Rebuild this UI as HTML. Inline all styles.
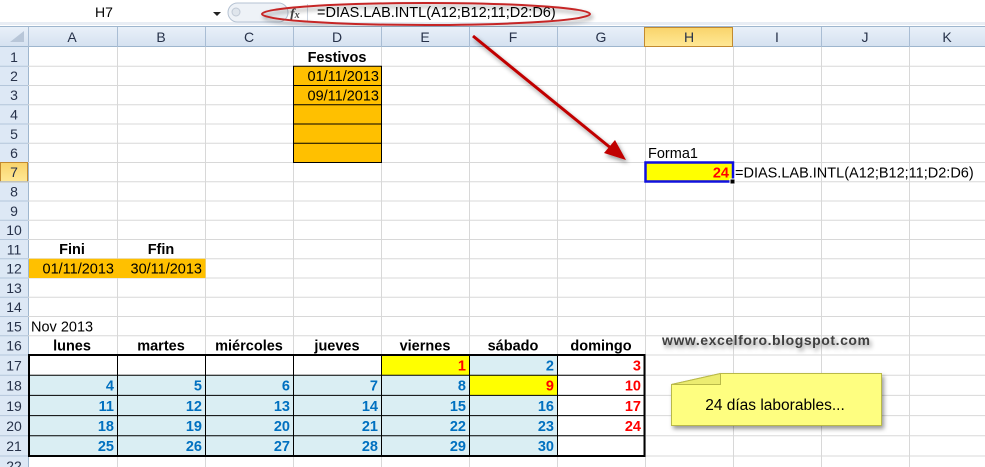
<!DOCTYPE html>
<html><head><meta charset="utf-8">
<style>
html,body{margin:0;padding:0;background:#fff;}
svg{display:block;font-family:"Liberation Sans",Arial,sans-serif;}
</style></head><body>
<svg width="985" height="467" viewBox="0 0 985 467" xmlns="http://www.w3.org/2000/svg">
<defs>
<linearGradient id="hg" x1="0" y1="0" x2="0" y2="1"><stop offset="0" stop-color="#e9f0f9"/><stop offset="1" stop-color="#d5e1f0"/></linearGradient>
<linearGradient id="og" x1="0" y1="0" x2="0" y2="1"><stop offset="0" stop-color="#f9d46b"/><stop offset="1" stop-color="#ffe896"/></linearGradient>
<filter id="sh" x="-20%" y="-20%" width="150%" height="160%"><feDropShadow dx="2" dy="3" stdDeviation="2" flood-color="#000" flood-opacity="0.4"/></filter>
</defs>
<!-- formula bar -->
<rect x="0" y="0" width="985" height="27" fill="#fff"/>
<rect x="0" y="22" width="985" height="3" fill="#e8edf4"/>
<line x1="0" y1="26.5" x2="985" y2="26.5" stroke="#9eb6ce"/>
<text x="104" y="17" font-size="14" fill="#000" text-anchor="middle">H7</text>
<path d="M213 12 h8 l-4 4 z" fill="#222"/>
<rect x="228" y="3" width="60" height="19" rx="9.5" fill="#eef2f7" stroke="#b6c3d3"/>
<circle cx="236" cy="12" r="4" fill="#dfe5ec" stroke="#c0c9d5"/>
<line x1="307.5" y1="4" x2="307.5" y2="21" stroke="#ccd5e0"/>
<text x="290" y="18" font-size="14" font-style="italic" font-weight="bold" font-family="Liberation Serif,serif" fill="#444">f<tspan font-size="10">x</tspan></text>
<text x="317" y="17" font-size="14.5" fill="#000">=DIAS.LAB.INTL(A12;B12;11;D2:D6)</text>
<ellipse cx="426" cy="14" rx="164" ry="11" fill="none" stroke="#c62828" stroke-width="2" filter="url(#sh)"/>

<!-- column header -->
<rect x="0" y="27" width="985" height="20" fill="url(#hg)"/>
<line x1="0" y1="46.5" x2="985" y2="46.5" stroke="#9eb6ce"/>
<path d="M10 42 L24 42 L24 31 Z" fill="#b8c6d8"/>
<rect x="644.5" y="27.5" width="88" height="19" fill="url(#og)" stroke="#c28a30"/>
<g stroke="#a9bdd4">
<line x1="28.5" y1="27" x2="28.5" y2="47"/><line x1="117.5" y1="27" x2="117.5" y2="47"/><line x1="205.5" y1="27" x2="205.5" y2="47"/><line x1="293.5" y1="27" x2="293.5" y2="47"/><line x1="381.5" y1="27" x2="381.5" y2="47"/><line x1="469.5" y1="27" x2="469.5" y2="47"/><line x1="557.5" y1="27" x2="557.5" y2="47"/><line x1="821.5" y1="27" x2="821.5" y2="47"/><line x1="909.5" y1="27" x2="909.5" y2="47"/>
</g>
<g font-size="14" fill="#27324a" text-anchor="middle">
<text x="72" y="42">A</text><text x="161" y="42">B</text><text x="249" y="42">C</text><text x="337" y="42">D</text><text x="425" y="42">E</text><text x="513" y="42">F</text><text x="601" y="42">G</text><text x="689" y="42">H</text><text x="777" y="42">I</text><text x="865" y="42">J</text><text x="947" y="42">K</text>
</g>

<!-- row header -->
<rect x="0" y="47" width="28" height="420" fill="#dde8f5"/>
<rect x="0.5" y="162.5" width="27" height="19.25" fill="url(#og)" stroke="#c28a30"/>
<line x1="28.5" y1="47" x2="28.5" y2="467" stroke="#9eb6ce"/>
<g stroke="#b4c6da">
<line x1="0" y1="66.25" x2="28" y2="66.25"/><line x1="0" y1="85.5" x2="28" y2="85.5"/><line x1="0" y1="104.75" x2="28" y2="104.75"/><line x1="0" y1="124" x2="28" y2="124"/><line x1="0" y1="143.25" x2="28" y2="143.25"/><line x1="0" y1="181.75" x2="28" y2="181.75"/><line x1="0" y1="201" x2="28" y2="201"/><line x1="0" y1="220.25" x2="28" y2="220.25"/><line x1="0" y1="239.5" x2="28" y2="239.5"/><line x1="0" y1="258.75" x2="28" y2="258.75"/><line x1="0" y1="278" x2="28" y2="278"/><line x1="0" y1="297.25" x2="28" y2="297.25"/><line x1="0" y1="316.5" x2="28" y2="316.5"/><line x1="0" y1="335.75" x2="28" y2="335.75"/><line x1="0" y1="355" x2="28" y2="355"/><line x1="0" y1="375.2" x2="28" y2="375.2"/><line x1="0" y1="395.4" x2="28" y2="395.4"/><line x1="0" y1="415.6" x2="28" y2="415.6"/><line x1="0" y1="435.8" x2="28" y2="435.8"/><line x1="0" y1="456" x2="28" y2="456"/>
</g>
<g font-size="14" fill="#27324a" text-anchor="middle">
<text x="14" y="62">1</text><text x="14" y="81">2</text><text x="14" y="100">3</text><text x="14" y="119.5">4</text><text x="14" y="139">5</text><text x="14" y="158">6</text><text x="14" y="177">7</text><text x="14" y="196.5">8</text><text x="14" y="216">9</text><text x="14" y="235">10</text><text x="14" y="254.5">11</text><text x="14" y="273.5">12</text><text x="14" y="293">13</text><text x="14" y="312">14</text><text x="14" y="331.5">15</text><text x="14" y="350.5">16</text><text x="14" y="370.5">17</text><text x="14" y="390.5">18</text><text x="14" y="411">19</text><text x="14" y="431">20</text><text x="14" y="451">21</text><text x="14" y="471">22</text>
</g>

<!-- gridlines -->
<g stroke="#d8d8d8">
<line x1="117.5" y1="47" x2="117.5" y2="467"/><line x1="205.5" y1="47" x2="205.5" y2="467"/><line x1="293.5" y1="47" x2="293.5" y2="467"/><line x1="381.5" y1="47" x2="381.5" y2="467"/><line x1="469.5" y1="47" x2="469.5" y2="467"/><line x1="557.5" y1="47" x2="557.5" y2="467"/><line x1="645.5" y1="47" x2="645.5" y2="467"/><line x1="733.5" y1="47" x2="733.5" y2="467"/><line x1="821.5" y1="47" x2="821.5" y2="467"/><line x1="909.5" y1="47" x2="909.5" y2="467"/>
<line x1="28" y1="66.25" x2="985" y2="66.25"/><line x1="28" y1="85.5" x2="985" y2="85.5"/><line x1="28" y1="104.75" x2="985" y2="104.75"/><line x1="28" y1="124" x2="985" y2="124"/><line x1="28" y1="143.25" x2="985" y2="143.25"/><line x1="28" y1="162.5" x2="985" y2="162.5"/><line x1="28" y1="181.75" x2="985" y2="181.75"/><line x1="28" y1="201" x2="985" y2="201"/><line x1="28" y1="220.25" x2="985" y2="220.25"/><line x1="28" y1="239.5" x2="985" y2="239.5"/><line x1="28" y1="258.75" x2="985" y2="258.75"/><line x1="28" y1="278" x2="985" y2="278"/><line x1="28" y1="297.25" x2="985" y2="297.25"/><line x1="28" y1="316.5" x2="985" y2="316.5"/><line x1="28" y1="335.75" x2="985" y2="335.75"/><line x1="28" y1="355" x2="985" y2="355"/><line x1="28" y1="375.2" x2="985" y2="375.2"/><line x1="28" y1="395.4" x2="985" y2="395.4"/><line x1="28" y1="415.6" x2="985" y2="415.6"/><line x1="28" y1="435.8" x2="985" y2="435.8"/><line x1="28" y1="456" x2="985" y2="456"/>
</g>

<!-- Festivos -->
<text x="337" y="62" font-size="14.5" font-weight="bold" text-anchor="middle">Festivos</text>
<rect x="293.5" y="66.25" width="88" height="96.25" fill="#ffc000"/>
<g stroke="#000" fill="none">
<rect x="293.5" y="66.25" width="88" height="96.25"/>
<line x1="293.5" y1="85.5" x2="381.5" y2="85.5"/><line x1="293.5" y1="104.75" x2="381.5" y2="104.75"/><line x1="293.5" y1="124" x2="381.5" y2="124"/><line x1="293.5" y1="143.25" x2="381.5" y2="143.25"/>
</g>
<g font-size="14.5" text-anchor="end">
<text x="379" y="81">01/11/2013</text><text x="379" y="100.5">09/11/2013</text>
</g>

<!-- Fini / Ffin -->
<rect x="29" y="258.75" width="176.5" height="19.25" fill="#ffc000"/>
<g font-size="14.5" font-weight="bold" text-anchor="middle"><text x="72" y="254">Fini</text><text x="161" y="254">Ffin</text></g>
<g font-size="14.5" text-anchor="end"><text x="114" y="273.5">01/11/2013</text><text x="202" y="273.5">30/11/2013</text></g>
<text x="31" y="331.5" font-size="14.5">Nov 2013</text>

<!-- Calendar headers -->
<g font-size="14.5" font-weight="bold" text-anchor="middle">
<text x="72" y="350.5">lunes</text><text x="161" y="350.5">martes</text><text x="249" y="350.5">miércoles</text><text x="337" y="350.5">jueves</text><text x="425" y="350.5">viernes</text><text x="513" y="350.5">sábado</text><text x="601" y="350.5">domingo</text>
</g>
<!-- calendar fills -->
<rect x="381.5" y="355" width="88" height="20.2" fill="#ffff00"/>
<rect x="469.5" y="355" width="88" height="20.2" fill="#daeef3"/>
<rect x="28.5" y="375.2" width="441" height="80.8" fill="#daeef3"/>
<rect x="469.5" y="375.2" width="88" height="20.2" fill="#ffff00"/>
<rect x="469.5" y="395.4" width="88" height="60.6" fill="#daeef3"/>
<g stroke="#000" fill="none">
<line x1="28" y1="375.2" x2="645" y2="375.2"/><line x1="28" y1="395.4" x2="645" y2="395.4"/><line x1="28" y1="415.6" x2="645" y2="415.6"/><line x1="28" y1="435.8" x2="645" y2="435.8"/>
<line x1="117.5" y1="355" x2="117.5" y2="456"/><line x1="205.5" y1="355" x2="205.5" y2="456"/><line x1="293.5" y1="355" x2="293.5" y2="456"/><line x1="381.5" y1="355" x2="381.5" y2="456"/><line x1="469.5" y1="355" x2="469.5" y2="456"/><line x1="557.5" y1="355" x2="557.5" y2="456"/>
<rect x="29" y="355" width="615.5" height="101" stroke-width="2"/>
</g>
<g font-size="14.5" font-weight="bold" text-anchor="end" fill="#0070c0">
<text x="466" y="370.5" fill="#ff0000">1</text><text x="554" y="370.5">2</text><text x="641" y="370.5" fill="#ff0000">3</text>
<text x="114" y="390.5">4</text><text x="202" y="390.5">5</text><text x="290" y="390.5">6</text><text x="378" y="390.5">7</text><text x="466" y="390.5">8</text><text x="554" y="390.5" fill="#ff0000">9</text><text x="641" y="390.5" fill="#ff0000">10</text>
<text x="114" y="411">11</text><text x="202" y="411">12</text><text x="290" y="411">13</text><text x="378" y="411">14</text><text x="466" y="411">15</text><text x="554" y="411">16</text><text x="641" y="411" fill="#ff0000">17</text>
<text x="114" y="431">18</text><text x="202" y="431">19</text><text x="290" y="431">20</text><text x="378" y="431">21</text><text x="466" y="431">22</text><text x="554" y="431">23</text><text x="641" y="431" fill="#ff0000">24</text>
<text x="114" y="451">25</text><text x="202" y="451">26</text><text x="290" y="451">27</text><text x="378" y="451">28</text><text x="466" y="451">29</text><text x="554" y="451">30</text>
</g>

<!-- H7 -->
<text x="648" y="158" font-size="14.5">Forma1</text>
<rect x="645.5" y="162.5" width="87.5" height="19" fill="#ffff00" stroke="#1010e0" stroke-width="2.5"/>
<rect x="730" y="179" width="5" height="5" fill="#000" stroke="#fff" stroke-width="1"/>
<text x="729" y="177.5" font-size="14.5" font-weight="bold" fill="#ff0000" text-anchor="end">24</text>
<text x="735" y="177.5" font-size="14.5">=DIAS.LAB.INTL(A12;B12;11;D2:D6)</text>

<!-- arrow -->
<g filter="url(#sh)">
<line x1="473" y1="36" x2="612" y2="149" stroke="#c00000" stroke-width="3"/>
<path d="M626 160 L604 153 L615 140 Z" fill="#c00000"/>
</g>

<!-- blog -->
<text x="662" y="345" font-size="14" font-weight="bold" fill="#404040" textLength="208" lengthAdjust="spacing" filter="url(#sh)">www.excelforo.blogspot.com</text>

<!-- note -->
<g filter="url(#sh)">
<path d="M671.5 384.5 L720.5 373.5 L881.5 373.5 L881.5 425.5 L671.5 425.5 Z" fill="#fefe80" stroke="#b9b948"/>
<path d="M671.5 384.5 L720.5 373.5 L720.5 384.5 Z" fill="#ecec70" stroke="#b9b948"/>
</g>
<text x="775" y="410" font-size="15.5" text-anchor="middle" fill="#000">24 días laborables...</text>
</svg>
</body></html>
